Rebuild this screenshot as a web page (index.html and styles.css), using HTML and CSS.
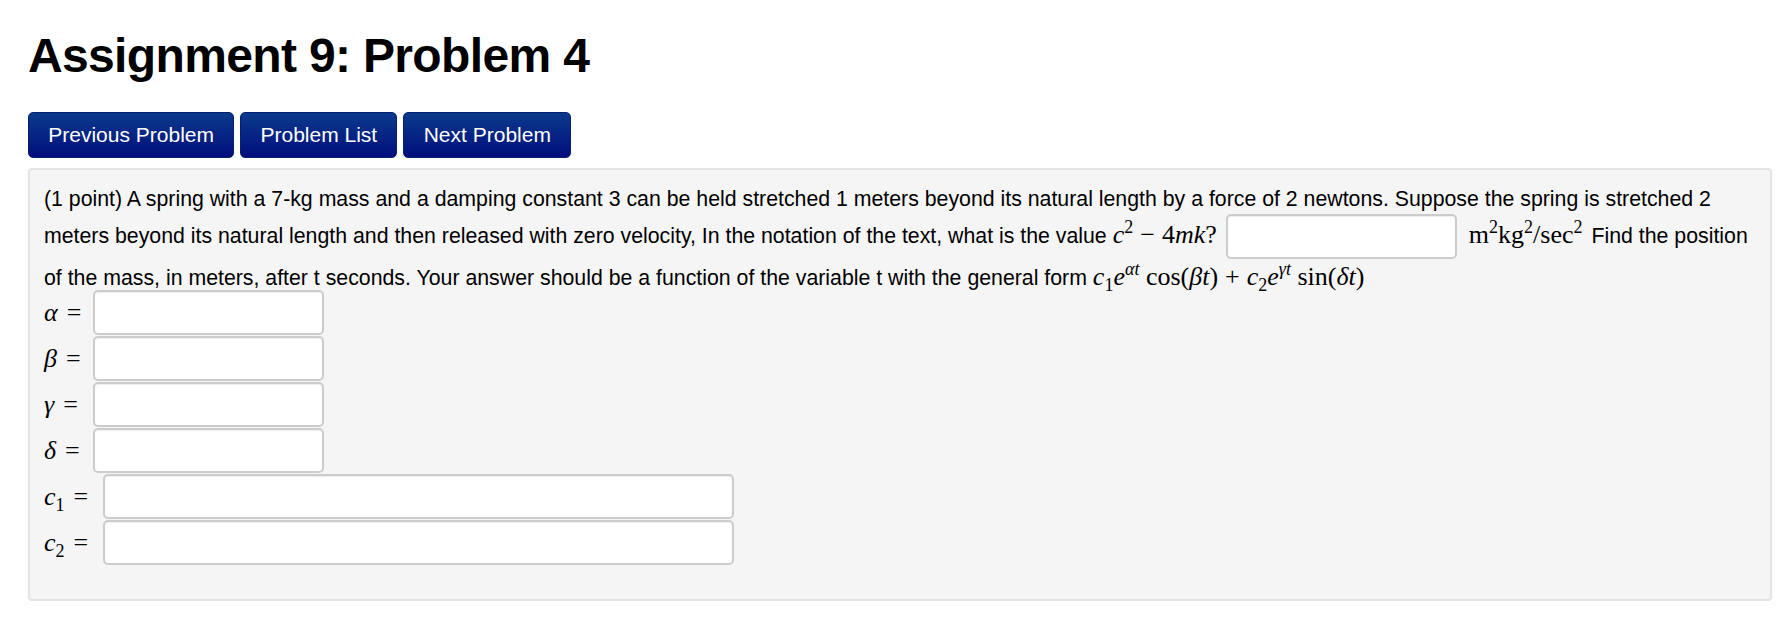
FILE: index.html
```html
<!DOCTYPE html>
<html>
<head>
    <title>Assignment 9: Problem 4</title>
    <link rel="stylesheet" href="styles.css">
</head>
<body>
    <!-- Header -->
    <h1 class="title">Assignment 9: Problem 4</h1>

    <!-- Navigation -->
    <div class="nav">
        <a class="btn">Previous Problem</a>
        <a class="btn">Problem List</a>
        <a class="btn">Next Problem</a>
    </div>

    <!-- Problem -->
    <div class="problem">
        <p class="line line-first">(1 point) A spring with a 7-kg mass and a damping constant 3 can be held stretched 1 meters beyond its natural length by a force of 2 newtons. Suppose the spring is stretched 2</p>
        <div class="line line-input">
            <span>meters beyond its natural length and then released with zero velocity, In the notation of the text, what is the value</span>
            <span class="math math-inline"><i>c</i><sup>2</sup><span class="op">−</span>4<i>mk</i>?</span>
            <input type="text" class="answer">
            <span class="math units">m<sup>2</sup>kg<sup>2</sup>/sec<sup>2</sup></span>
            <span class="after-units">Find the position</span>
        </div>
        <p class="line line-last">of the mass, in meters, after t seconds. Your answer should be a function of the variable t with the general form <span class="math"><i>c</i><sub>1</sub><i>e</i><sup><i>αt</i></sup> cos(<i>βt</i>)<span class="op">+</span><i>c</i><sub>2</sub><i>e</i><sup><i>γt</i></sup> sin(<i>δt</i>)</span></p>

        <div class="answers">
            <div class="row"><span class="math label"><i>α</i><span class="op">=</span></span><input type="text" class="answer"></div>
            <div class="row"><span class="math label"><i>β</i><span class="op">=</span></span><input type="text" class="answer"></div>
            <div class="row"><span class="math label"><i>γ</i><span class="op">=</span></span><input type="text" class="answer"></div>
            <div class="row"><span class="math label"><i>δ</i><span class="op">=</span></span><input type="text" class="answer"></div>
            <div class="row"><span class="math label label-wide"><i>c</i><sub>1</sub><span class="op">=</span></span><input type="text" class="answer answer-wide"></div>
            <div class="row"><span class="math label label-wide"><i>c</i><sub>2</sub><span class="op">=</span></span><input type="text" class="answer answer-wide"></div>
        </div>
    </div>
</body>
</html>
```

FILE: styles.css
```css
/* General Styles */
body {
    font-family: "Liberation Sans", Arial, sans-serif;
    margin: 0;
    padding: 0 6px 0 28px;
    background: #fff;
    color: #000;
}

/* Header */
.title {
    margin: 0;
    padding-top: 28px;
    font-size: 48px;
    line-height: 56px;
    font-weight: bold;
    letter-spacing: -0.65px;
}

/* Navigation */
.nav {
    display: flex;
    gap: 6px;
    margin-top: 28px;
}

.btn {
    padding: 0 19.25px;
    height: 44px;
    line-height: 44px;
    font-size: 21px;
    color: #fff;
    background: linear-gradient(#0b3a8c, #000e7c);
    border: 1px solid #06206f;
    border-radius: 5px;
}

/* Problem */
.problem {
    box-sizing: border-box;
    height: 433px;
    margin-top: 10px;
    padding: 14px 14px;
    background: #f5f5f5;
    border: 2px solid #e4e4e4;
    border-radius: 4px;
    font-size: 21.3px;
}

.line {
    margin: 0;
    white-space: nowrap;
}

.line-first {
    line-height: 30px;
}

.line-input {
    display: flex;
    align-items: baseline;
    height: 45px;
    line-height: 42px;
}

.line-last {
    line-height: 35px;
}

.math {
    font-family: "Liberation Serif", "Times New Roman", serif;
    font-size: 26px;
}

.math sup,
.math sub {
    font-size: 18px;
    line-height: 0;
}

.math-inline {
    margin-left: 6px;
}

.units {
    margin-left: 12px;
}

.after-units {
    margin-left: 9px;
}

.op {
    margin: 0 7px;
}

.answer {
    box-sizing: border-box;
    width: 231px;
    height: 45px;
    margin-left: 9px;
    align-self: center;
    background: #fff;
    border: 2px solid #ccc;
    border-radius: 5px;
    box-shadow: inset 0 1px 1px rgba(0, 0, 0, 0.07);
}

.answer-wide {
    width: 631px;
}

/* Answer rows */
.answers {
    display: flex;
    flex-direction: column;
    gap: 1px;
    margin-top: -6px;
}

.row {
    display: flex;
    align-items: center;
}

.label {
    width: 49px;
    white-space: nowrap;
}

.label .op {
    margin-left: 9px;
}

.label-wide {
    width: 59px;
}

.row .answer {
    margin: 0;
}
```
